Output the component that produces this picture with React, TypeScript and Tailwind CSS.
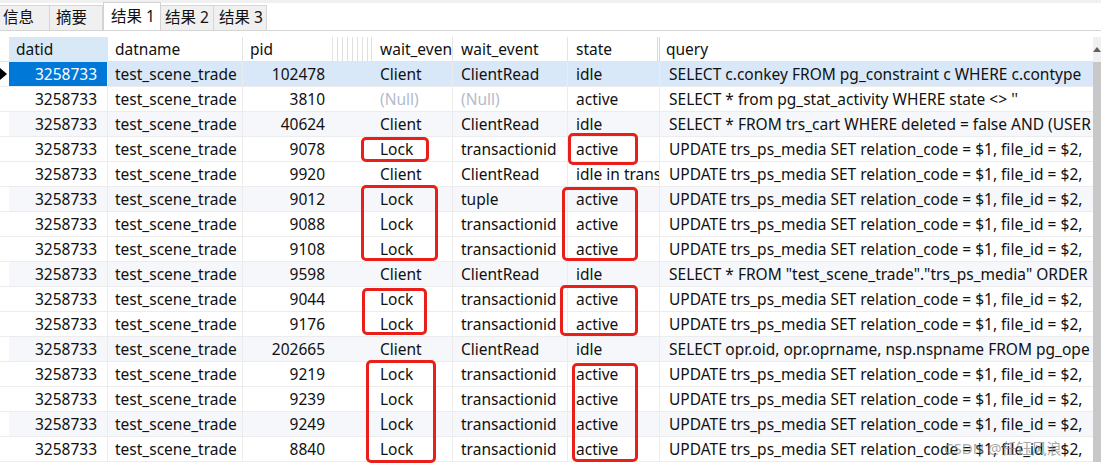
import React from "react";

type Row = {
  pid: string;
  waitType: string;
  waitEvent: string;
  state: string;
  query: string;
};

const UPD = "UPDATE trs_ps_media SET relation_code = $1, file_id = $2,";

const rows: Row[] = [
  { pid: "102478", waitType: "Client", waitEvent: "ClientRead", state: "idle", query: "SELECT c.conkey FROM pg_constraint c WHERE c.contype" },
  { pid: "3810", waitType: "(Null)", waitEvent: "(Null)", state: "active", query: "SELECT * from pg_stat_activity WHERE state <> ''" },
  { pid: "40624", waitType: "Client", waitEvent: "ClientRead", state: "idle", query: "SELECT * FROM trs_cart WHERE deleted = false AND (USER" },
  { pid: "9078", waitType: "Lock", waitEvent: "transactionid", state: "active", query: UPD },
  { pid: "9920", waitType: "Client", waitEvent: "ClientRead", state: "idle in transaction", query: UPD },
  { pid: "9012", waitType: "Lock", waitEvent: "tuple", state: "active", query: UPD },
  { pid: "9088", waitType: "Lock", waitEvent: "transactionid", state: "active", query: UPD },
  { pid: "9108", waitType: "Lock", waitEvent: "transactionid", state: "active", query: UPD },
  { pid: "9598", waitType: "Client", waitEvent: "ClientRead", state: "idle", query: 'SELECT * FROM "test_scene_trade"."trs_ps_media" ORDER' },
  { pid: "9044", waitType: "Lock", waitEvent: "transactionid", state: "active", query: UPD },
  { pid: "9176", waitType: "Lock", waitEvent: "transactionid", state: "active", query: UPD },
  { pid: "202665", waitType: "Client", waitEvent: "ClientRead", state: "idle", query: "SELECT opr.oid, opr.oprname, nsp.nspname FROM pg_ope" },
  { pid: "9219", waitType: "Lock", waitEvent: "transactionid", state: "active", query: UPD },
  { pid: "9239", waitType: "Lock", waitEvent: "transactionid", state: "active", query: UPD },
  { pid: "9249", waitType: "Lock", waitEvent: "transactionid", state: "active", query: UPD },
  { pid: "8840", waitType: "Lock", waitEvent: "transactionid", state: "active", query: UPD },
];

// rows with the faint tinted background
const tinted = [2, 5, 8, 11, 14];

// red annotation boxes drawn over the grid: left, top, width, height
const marks = [
  [361, 137, 68, 25],
  [568, 133, 70, 32],
  [361, 185, 77, 76],
  [562, 187, 76, 74],
  [362, 288, 65, 47],
  [560, 285, 78, 51],
  [366, 360, 70, 103],
  [572, 363, 66, 99],
];

const font = { fontFamily: '"Noto Sans", "Noto Sans CJK SC", sans-serif' };

const tabs = [
  { label: "信息", w: "w-[50px] pl-[3px]" },
  { label: "摘要", w: "w-[53px] pl-[6px]" },
  { label: "结果 1", w: "w-[58px] pl-[7px]", active: true },
  { label: "结果 2", w: "w-[53px] pl-[4px]" },
  { label: "结果 3", w: "w-[53px] pl-[5px]" },
];

const App: React.FC = () => {
  return (
    <div className="relative w-[1101px] h-[465px] overflow-hidden bg-white" style={font}>
      {/* tab strip */}
      <div className="h-[3px] bg-[#f0f0f0]" />
      <div className="h-[28px] flex items-end border-b border-[#d4d4d4] bg-white">
        {tabs.map((t) =>
          t.active ? (
            <div
              key={t.label}
              className={`${t.w} h-[28px] bg-white border-x border-t border-[#d2d2d2] flex items-center text-[15.5px] text-[#111] whitespace-nowrap`}
            >
              {t.label}
            </div>
          ) : (
            <div
              key={t.label}
              className={`${t.w} h-[25px] bg-[#f0f0f0] border-r border-t border-[#d6d6d6] flex items-center text-[15.5px] text-[#111] whitespace-nowrap`}
            >
              {t.label}
            </div>
          )
        )}
      </div>
      <div className="h-[6px]" />

      {/* grid */}
      <div className="flex text-[15.5px] text-[#111]">
        <div className="w-[1093px] shrink-0">
          {/* header */}
          <div className="flex h-[25px] leading-[25px] border-b border-[#e4e4e4]">
            <div className="w-[9px] shrink-0" />
            <div className="w-[99px] shrink-0 pl-[7px] bg-[#d9e8f7] border-r border-[#e4e4e4]">datid</div>
            <div className="w-[135px] shrink-0 pl-[7px] border-r border-[#e4e4e4]">datname</div>
            <div className="w-[90px] shrink-0 pl-[7px] border-r border-[#e4e4e4]">pid</div>
            <div className="w-[39px] shrink-0 flex">
              {[0, 1, 2, 3, 4, 5, 6, 7].map((i) => (
                <div key={i} className="w-[5px] shrink-0 border-r border-[#e0e0e0] last:w-[4px]" />
              ))}
            </div>
            <div className="w-[81px] shrink-0 pl-[8px] border-r border-[#e4e4e4] overflow-hidden whitespace-nowrap">wait_event_type</div>
            <div className="w-[115px] shrink-0 pl-[8px] border-r border-[#e4e4e4]">wait_event</div>
            <div className="w-[92px] shrink-0 pl-[8px] border-r-[3px] border-double border-[#d8d8d8]">state</div>
            <div className="flex-1 pl-[6px]">query</div>
          </div>

          {rows.map((r, i) => {
            const sel = i === 0;
            const bg = sel ? "bg-[#d9e8f8]" : tinted.includes(i) ? "bg-[#f5f7fa]" : "bg-white";
            const nullCls = (v: string) => (v === "(Null)" ? "text-[#b4bccb]" : "");
            return (
              <div key={i} className={`flex h-[25px] leading-[24px] border-b border-[#ececec] ${bg}`}>
                <div className="w-[9px] shrink-0 bg-white flex items-center">
                  {sel && <span className="block w-0 h-0 border-y-[6px] border-y-transparent border-l-[7px] border-l-black" />}
                </div>
                <div
                  className={`w-[99px] shrink-0 pr-[10px] text-right border-r border-[#ececec] ${
                    sel ? "bg-[#0078d7] text-white" : ""
                  }`}
                >
                  3258733
                </div>
                <div className="w-[135px] shrink-0 pl-[7px] border-r border-[#ececec]">test_scene_trade</div>
                <div className="w-[90px] shrink-0 pr-[8px] text-right">{r.pid}</div>
                <div className="w-[39px] shrink-0" />
                <div className={`w-[81px] shrink-0 pl-[8px] border-r border-[#ececec] ${nullCls(r.waitType)}`}>{r.waitType}</div>
                <div className={`w-[115px] shrink-0 pl-[8px] border-r border-[#ececec] ${nullCls(r.waitEvent)}`}>{r.waitEvent}</div>
                <div className="w-[92px] shrink-0 pl-[8px] border-r border-[#ececec] overflow-hidden whitespace-nowrap">{r.state}</div>
                <div className="flex-1 pl-[9px] overflow-hidden whitespace-nowrap">{r.query}</div>
              </div>
            );
          })}
        </div>

        {/* vertical scrollbar */}
        <div className="w-[8px] shrink-0 flex flex-col">
          <div className="h-[25px] bg-[#f0f0f0] flex items-center">
            <span className="block w-0 h-0 border-x-[4px] border-x-transparent border-b-[5px] border-b-[#606060]" />
          </div>
          <div className="flex-1 bg-[#c8c8c8]" />
        </div>
      </div>

      {/* annotation boxes */}
      {marks.map(([l, t, w, h], i) => (
        <div
          key={i}
          className="absolute border-[3px] border-[#ea1f1a] rounded-[5px]"
          style={{ left: l, top: t, width: w, height: h }}
        />
      ))}

      {/* watermark */}
      <div className="absolute left-[944px] top-[437px] text-[15px] text-[#8c8c8c]/75 whitespace-nowrap">
        CSDN @任钰风浪
      </div>
    </div>
  );
};

export default App;
